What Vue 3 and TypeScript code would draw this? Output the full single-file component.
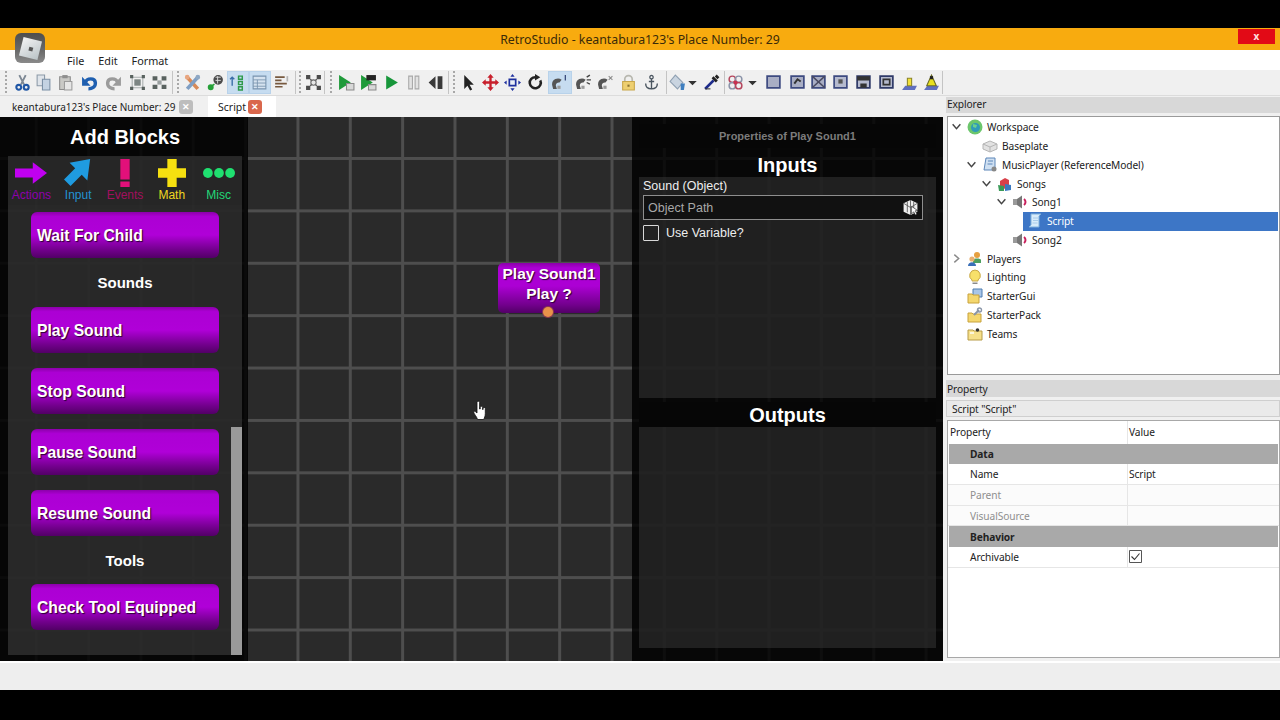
<script setup lang="ts">
/**
 * RetroStudio visual script editor window
 */
interface Part {
  d: string
  fill?: string
  stroke?: string
  sw?: number
}

interface ToolItem {
  k: 'tool' | 'sep' | 'grip'
  w: number
  icon?: string
  active?: boolean
}

// circle as a path, so every icon is just a list of paths
const c = (x: number, y: number, r: number) =>
  `M${x - r} ${y}a${r} ${r} 0 1 0 ${2 * r} 0a${r} ${r} 0 1 0 ${-2 * r} 0Z`

const icons: Record<string, Part[]> = {
  cut: [
    { d: 'M5 1l4.5 9M11 1L6.5 10', stroke: '#7d8894', sw: 1.8 },
    { d: c(4.5, 12.5, 2.3), stroke: '#1f56a5', sw: 2, fill: 'none' },
    { d: c(11.5, 12.5, 2.3), stroke: '#1f56a5', sw: 2, fill: 'none' },
  ],
  copy: [
    { d: 'M2 1h7v10H2z', fill: '#dfe4ea', stroke: '#8b99a8' },
    { d: 'M7 5h7v10H7z', fill: '#c4d2e2', stroke: '#7b8fa5' },
  ],
  paste: [
    { d: 'M2.5 2.5h10v12h-10z', fill: '#c9c9c6', stroke: '#8e8e8e' },
    { d: 'M5 1h5v3H5z', fill: '#8f8f8f' },
    { d: 'M7 7h7v8H7z', fill: '#e6e6e6', stroke: '#9b9b9b' },
  ],
  undo: [
    { d: 'M4 8c1.5-4.5 9-4.5 9.5 0s-3.5 6-6.5 6', stroke: '#1f5fb0', sw: 3.2, fill: 'none' },
    { d: 'M1 2.5V11h8z', fill: '#1f5fb0' },
  ],
  redo: [
    { d: 'M12 8c-1.5-4.5-9-4.500-9.5 0s3.5 6 6.5 6', stroke: '#9b9b9b', sw: 3.2, fill: 'none' },
    { d: 'M15 2.5V11H7z', fill: '#9b9b9b' },
  ],
  group: [
    { d: 'M3 3h10v10H3z', stroke: '#a9afaf', fill: 'none', sw: 1 },
    { d: 'M5 5h6v6H5z', fill: '#7d8684' },
    { d: 'M1 1h3v3H1zM12 1h3v3h-3zM1 12h3v3H1zM12 12h3v3h-3z', fill: '#59625f' },
  ],
  ungroup: [
    { d: 'M1.5 2H6v4H1.500zM10 2h4.5v4H10zM1.5 10H6v4H1.500zM10 10h4.5v4H10z', fill: '#59625f' },
    { d: 'M6 6h4v4H6z', fill: '#9aa0a0' },
  ],
  wrench: [
    { d: 'M3 3l10 11', stroke: '#d88a58', sw: 3.4 },
    { d: 'M13 3L3 14', stroke: '#7f9fc4', sw: 3.4 },
    { d: c(3, 3, 2.2), fill: '#e8a680' },
    { d: c(13, 3, 2.2), fill: '#8fa8c4' },
  ],
  scriptGear: [
    { d: c(10.5, 5.5, 4.5), fill: '#4b4b4b' },
    { d: 'M8 3h5M8 6h5M10 2v7', stroke: '#d8d8d8', sw: 0.9 },
    { d: c(3.5, 12.5, 2.8), fill: '#26a038' },
    { d: 'M7 9.5L5 11', stroke: '#26a038', sw: 1.4 },
  ],
  tree: [
    { d: 'M3 3v8M1 5l2-2 2 2', stroke: '#3b6ea8', sw: 1.3, fill: 'none' },
    { d: 'M9 2h3.5v3H9zM9 7h3.5v3H9zM9 12h3.5v3H9z', stroke: '#2f9a4c', sw: 1.4, fill: 'none' },
  ],
  table: [
    { d: 'M2 2h12v12H2z', fill: '#d5e2ef', stroke: '#7893ae' },
    { d: 'M2 5.5h12M2 8.5h12M2 11.5h12M6 5.5V14', stroke: '#7893ae', sw: 0.8 },
  ],
  list: [
    { d: 'M2 3h9M2 6h6M2 9h11M2 12h7', stroke: '#77593f', sw: 1.6 },
    { d: 'M13.5 2v5', stroke: '#b5b5b5', sw: 1.6 },
  ],
  fit: [
    { d: 'M1 1h4v4H1zM11 1h4v4h-4zM1 11h4v4H1zM11 11h4v4h-4z', fill: '#4a4a4a' },
    { d: 'M5 5l6 6M11 5l-6 6', stroke: '#4a4a4a', sw: 1.3 },
    { d: c(8, 8, 2.5), fill: '#e7e7e7', stroke: '#666' },
  ],
  playServer: [
    { d: 'M1 1l11 7-11 7z', fill: '#1f9a3a' },
    { d: 'M8 9h7v6H8z', fill: '#d8d8d8', stroke: '#8a8a8a' },
  ],
  playClient: [
    { d: 'M1 1l11 7-11 7z', fill: '#1f9a3a' },
    { d: 'M6 1h9v5H6z', fill: '#222' },
    { d: 'M8 10h7v5H8z', fill: '#d8d8d8', stroke: '#8a8a8a' },
  ],
  play: [{ d: 'M3 1.5l11 6.5-11 6.5z', fill: '#17963a' }],
  pause: [{ d: 'M3.5 2H7v12H3.5zM9.5 2H13v12H9.5z', fill: '#e2e2e2', stroke: '#a8a8a8' }],
  stepBack: [{ d: 'M8 2v12L1.5 8zM10 2h4.5v12H10z', fill: '#3a3a3a' }],
  cursor: [{ d: 'M4 1v13l3-3 2.5 4.5 2-1L9 10h4z', fill: '#222' }],
  move: [
    { d: 'M8 2v12M2 8h12', stroke: '#c8202c', sw: 2.2 },
    { d: 'M8 0l3 3.5H5zM8 16l3-3.5H5zM0 8l3.5 3V5zM16 8l-3.5 3V5z', fill: '#c8202c' },
  ],
  scale: [
    { d: 'M5 5h6v6H5z', fill: '#e9eef6', stroke: '#1e2f9e', sw: 1.6 },
    { d: 'M8 0l2 2.5H6zM8 16l2-2.5H6zM0 8l2.5 2V6zM16 8l-2.5 2V6z', fill: '#1e2f9e' },
  ],
  rotate: [
    { d: 'M12.5 6A5.2 5.2 0 1 1 8 3', stroke: '#222', sw: 2.4, fill: 'none' },
    { d: 'M7.5 0l5 3-5 3z', fill: '#222' },
  ],
  snap1: [
    { d: 'M1 10a5.5 5.5 0 0 1 9-4.5L8 8a2.8 2.8 0 0 0-3.5 2.5l1 3.5H2z', fill: '#555' },
    { d: 'M6 11h3v3H6z', fill: '#9a9a9a' },
    { d: 'M13.5 1v5', stroke: '#3a4a7a', sw: 1.2 },
  ],
  snap2: [
    { d: 'M1 10a5.5 5.5 0 0 1 9-4.5L8 8a2.8 2.8 0 0 0-3.5 2.5l1 3.5H2z', fill: '#555' },
    { d: 'M6 11h3v3H6z', fill: '#9a9a9a' },
    { d: 'M11 3l3-2M11 5.5h4M11 8l3 1.5', stroke: '#444', sw: 1.3 },
  ],
  snap3: [
    { d: 'M1 10a5.5 5.5 0 0 1 9-4.5L8 8a2.8 2.8 0 0 0-3.5 2.5l1 3.5H2z', fill: '#555' },
    { d: 'M6 11h3v3H6z', fill: '#9a9a9a' },
    { d: 'M11 2l3.5 3.5M14.5 2L11 5.5', stroke: '#8a8a8a', sw: 1 },
  ],
  lock: [
    { d: 'M4.5 7V5a3.5 3.5 0 0 1 7 0v2', stroke: '#b8b8b0', sw: 1.6, fill: 'none' },
    { d: 'M2.5 7h11v8h-11z', fill: '#eecf70', stroke: '#c8a648' },
    { d: 'M7 10h2v2H7z', fill: '#8a7230' },
  ],
  anchor: [
    { d: c(8, 3, 1.6), stroke: '#4a5560', fill: 'none', sw: 1.2 },
    { d: 'M8 4.5V14M2.5 9c0 4 3 5 5.5 5s5.5-1 5.5-5M5.5 7h5', stroke: '#4a5560', sw: 1.3, fill: 'none' },
  ],
  bucket: [
    { d: 'M6 1l7 7-5 6-7-7z', fill: '#c9d4e0', stroke: '#8fa0b2' },
    { d: 'M11 9h4l-1 6h-3z', fill: '#3f7fc0' },
  ],
  drop: [{ d: 'M4 6.5h8l-4 4z', fill: '#333' }],
  dropper: [
    { d: 'M2 14L10 6', stroke: '#1e2c8c', sw: 2.6 },
    { d: 'M9 3l4 4M12 1.5L14.5 4', stroke: '#222', sw: 2.6 },
    { d: 'M2 14h5', stroke: '#333', sw: 1 },
  ],
  material: [
    { d: c(5, 5, 3), stroke: '#b5475e', fill: 'none', sw: 1.4 },
    { d: c(11, 5, 3), stroke: '#8a93a8', fill: 'none', sw: 1.4 },
    { d: c(5, 11, 3), stroke: '#8a93a8', fill: 'none', sw: 1.4 },
    { d: c(11, 11, 3), stroke: '#b5475e', fill: 'none', sw: 1.4 },
    { d: c(8, 8, 2), fill: '#c9304f' },
  ],
  sf1: [{ d: 'M2 2h12v11H2z', fill: '#a9aec4', stroke: '#3d4a80', sw: 1.6 }],
  sf2: [
    { d: 'M2 2h12v11H2z', fill: '#a9aec4', stroke: '#3d4a80', sw: 1.6 },
    { d: 'M5 9l3-4 3 2', stroke: '#333', sw: 1.8, fill: 'none' },
  ],
  sf3: [
    { d: 'M2 2h12v11H2z', fill: '#a9aec4', stroke: '#3d4a80', sw: 1.6 },
    { d: 'M2 2l12 11M14 2L2 13', stroke: '#4a4a60', sw: 1.4 },
  ],
  sf4: [
    { d: 'M2 2h12v11H2z', fill: '#b5bace', stroke: '#3d4a80', sw: 1.6 },
    { d: 'M6 5h4v4H6z', fill: '#555' },
  ],
  sf5: [
    { d: 'M2 2h12v11H2z', fill: '#b5bace', stroke: '#2f3a68', sw: 1.6 },
    { d: 'M2 2h12v4H2zM5 9h6v4H5z', fill: '#333' },
  ],
  sf6: [
    { d: 'M2 2h12v11H2z', fill: '#b5bace', stroke: '#2f3a68', sw: 1.6 },
    { d: 'M5 5h6v5H5z', fill: 'none', stroke: '#333', sw: 1.6 },
  ],
  axis1: [
    { d: 'M1 15l3-4h11l-2 4z', fill: '#5f6fc0' },
    { d: 'M6 4h4v7H6z', fill: '#f2e03a', stroke: '#8a8428' },
  ],
  axis2: [
    { d: 'M1 15l3-4h11l-2 4z', fill: '#5f6fc0' },
    { d: 'M8 1l4.5 10h-9z', fill: '#e8e020', stroke: '#6a6a20' },
    { d: 'M6.5 2h3v3h-3z', fill: '#222' },
  ],
  globe: [
    { d: c(8, 8, 7.5), fill: '#6cc66c' },
    { d: c(8.5, 8.5, 4.5), fill: '#2f9bb8' },
    { d: 'M6 5l4 1-1 3-3-1z', fill: '#6cd08c' },
  ],
  cube: [
    { d: 'M8 3l7 3v5l-7 3-7-3V6z', fill: '#e2e2e2', stroke: '#b5b5b5' },
    { d: 'M1 6l7 3 7-3M8 9v5', stroke: '#b5b5b5', fill: 'none' },
  ],
  modelRef: [
    { d: 'M4 1h9v12H2z', fill: '#cfe0f2', stroke: '#5c86b8' },
    { d: 'M6 4h5M5.5 7h5', stroke: '#5c86b8' },
    { d: c(12, 12, 2.5), fill: '#888' },
  ],
  model: [
    { d: 'M3 5l5-3 4 2v6l-5 3-4-2z', fill: '#d8404a' },
    { d: 'M8 8l6 1v5l-6 1z', fill: '#3b78c0' },
    { d: 'M1 9l6 1v5H2z', fill: '#3a9a58' },
  ],
  speaker: [
    { d: 'M1 5h4v6H1z', fill: '#9a9a9a' },
    { d: 'M5 5l5-3.5v13L5 11z', fill: '#777' },
    { d: 'M12 5c2 1.5 2 4.5 0 6', stroke: '#c8205c', sw: 2, fill: 'none' },
  ],
  scriptDoc: [
    { d: 'M4 1h10l-2 2v11H2l2-2z', fill: '#d8ecfa', stroke: '#7fb0dc' },
    { d: 'M6 5h5M6 7.5h5M5.5 10h5', stroke: '#9cc4e6', sw: 0.8 },
  ],
  players: [
    { d: c(10, 4, 3), fill: '#e6a040' },
    { d: 'M6 9c0-2 8-2 8 0v3H6z', fill: '#4fa060' },
    { d: c(5, 8, 2.6), fill: '#e8b070' },
    { d: 'M1 15c0-5 8-5 8 0z', fill: '#3a6fb8' },
  ],
  bulb: [
    { d: 'M8 1a5.5 5.5 0 0 1 3 10v1H5v-1A5.5 5.5 0 0 1 8 1z', fill: '#f7e06a', stroke: '#c8a848' },
    { d: 'M5.5 13.5h5V15h-5z', fill: '#8a8a8a' },
  ],
  folderGui: [
    { d: 'M6 1h9v8H6z', fill: '#a9c6e8', stroke: '#4f7db0' },
    { d: 'M1 6h4l1 1h6v8H1z', fill: '#f4d76e', stroke: '#c8a23c' },
  ],
  folderPack: [
    { d: 'M1 6h4l1 1h8v8H1z', fill: '#f4d76e', stroke: '#c8a23c' },
    { d: 'M7 8l5-5', stroke: '#8a96a8', sw: 2 },
    { d: c(12.5, 3, 2), fill: 'none', stroke: '#8a96a8', sw: 1.4 },
  ],
  folderTeams: [
    { d: 'M1 4h5l1 1h8v9H1z', fill: '#f6e08a', stroke: '#b89c48' },
    { d: c(10.5, 4, 1.8), fill: '#333' },
    { d: 'M3 7h4', stroke: '#fff', sw: 1.4 },
  ],
}

const toolbar: ToolItem[] = [
  { k: 'grip', w: 11.5 },
  { k: 'tool', w: 21, icon: 'cut' },
  { k: 'tool', w: 21.5, icon: 'copy' },
  { k: 'tool', w: 23, icon: 'paste' },
  { k: 'tool', w: 24, icon: 'undo' },
  { k: 'tool', w: 24.5, icon: 'redo' },
  { k: 'tool', w: 24, icon: 'group' },
  { k: 'tool', w: 20.5, icon: 'ungroup' },
  { k: 'sep', w: 4 },
  { k: 'grip', w: 7 },
  { k: 'tool', w: 22.5, icon: 'wrench' },
  { k: 'tool', w: 23, icon: 'scriptGear' },
  { k: 'tool', w: 22, icon: 'tree', active: true },
  { k: 'tool', w: 22, icon: 'table', active: true },
  { k: 'tool', w: 22.5, icon: 'list' },
  { k: 'sep', w: 4 },
  { k: 'grip', w: 6 },
  { k: 'tool', w: 20, icon: 'fit' },
  { k: 'sep', w: 3 },
  { k: 'grip', w: 9 },
  { k: 'tool', w: 22.5, icon: 'playServer' },
  { k: 'tool', w: 22.5, icon: 'playClient' },
  { k: 'tool', w: 22, icon: 'play' },
  { k: 'tool', w: 22.5, icon: 'pause' },
  { k: 'tool', w: 22.5, icon: 'stepBack' },
  { k: 'sep', w: 3 },
  { k: 'grip', w: 7 },
  { k: 'tool', w: 22, icon: 'cursor' },
  { k: 'tool', w: 22.5, icon: 'move' },
  { k: 'tool', w: 22.5, icon: 'scale' },
  { k: 'tool', w: 23.5, icon: 'rotate' },
  { k: 'tool', w: 24.5, icon: 'snap1', active: true },
  { k: 'tool', w: 22, icon: 'snap2' },
  { k: 'tool', w: 23, icon: 'snap3' },
  { k: 'tool', w: 23, icon: 'lock' },
  { k: 'tool', w: 22, icon: 'anchor' },
  { k: 'sep', w: 8 },
  { k: 'tool', w: 14, icon: 'bucket' },
  { k: 'tool', w: 16, icon: 'drop' },
  { k: 'tool', w: 23, icon: 'dropper' },
  { k: 'sep', w: 3 },
  { k: 'tool', w: 19, icon: 'material' },
  { k: 'tool', w: 14, icon: 'drop' },
  { k: 'tool', w: 28, icon: 'sf1' },
  { k: 'tool', w: 20, icon: 'sf2' },
  { k: 'tool', w: 22.5, icon: 'sf3' },
  { k: 'tool', w: 22.5, icon: 'sf4' },
  { k: 'tool', w: 23, icon: 'sf5' },
  { k: 'tool', w: 23, icon: 'sf6' },
  { k: 'tool', w: 22.5, icon: 'axis1' },
  { k: 'tool', w: 21, icon: 'axis2' },
  { k: 'sep', w: 2 },
]

const categories = [
  { label: 'Actions', cls: 'actions' },
  { label: 'Input', cls: 'input' },
  { label: 'Events', cls: 'events' },
  { label: 'Math', cls: 'math' },
  { label: 'Misc', cls: 'misc' },
]

const blockList = [
  { type: 'block', text: 'Wait For Child' },
  { type: 'label', text: 'Sounds' },
  { type: 'block', text: 'Play Sound' },
  { type: 'block', text: 'Stop Sound' },
  { type: 'block', text: 'Pause Sound' },
  { type: 'block', text: 'Resume Sound' },
  { type: 'label', text: 'Tools' },
  { type: 'block', text: 'Check Tool Equipped' },
]

const tree = [
  { level: 0, arrow: 'open', icon: 'globe', text: 'Workspace' },
  { level: 1, arrow: '', icon: 'cube', text: 'Baseplate' },
  { level: 1, arrow: 'open', icon: 'modelRef', text: 'MusicPlayer (ReferenceModel)' },
  { level: 2, arrow: 'open', icon: 'model', text: 'Songs' },
  { level: 3, arrow: 'open', icon: 'speaker', text: 'Song1' },
  { level: 4, arrow: '', icon: 'scriptDoc', text: 'Script', selected: true },
  { level: 3, arrow: '', icon: 'speaker', text: 'Song2' },
  { level: 0, arrow: 'closed', icon: 'players', text: 'Players' },
  { level: 0, arrow: '', icon: 'bulb', text: 'Lighting' },
  { level: 0, arrow: '', icon: 'folderGui', text: 'StarterGui' },
  { level: 0, arrow: '', icon: 'folderPack', text: 'StarterPack' },
  { level: 0, arrow: '', icon: 'folderTeams', text: 'Teams' },
]
</script>

<template>
  <div class="window">
    <div class="letterbox-top"></div>

    <div class="titlebar">
      <span>RetroStudio - keantabura123's Place Number: 29</span>
      <div class="close-btn">x</div>
    </div>

    <!-- logo hangs over title and menu bars -->
    <div class="logo"><div class="logo-square"><i></i></div></div>

    <div class="menubar">
      <span>File</span>
      <span>Edit</span>
      <span>Format</span>
    </div>

    <div class="toolbar">
      <template v-for="(item, i) in toolbar" :key="i">
        <div v-if="item.k === 'grip'" class="grip" :style="{ width: item.w + 'px' }"><i></i></div>
        <div v-else-if="item.k === 'sep'" class="sep" :style="{ width: item.w + 'px' }"><i></i></div>
        <div v-else class="tool" :class="{ active: item.active }" :style="{ width: item.w + 'px' }">
          <svg class="tool-icon" viewBox="0 0 16 16">
            <path
              v-for="(p, j) in icons[item.icon!]"
              :key="j"
              :d="p.d"
              :fill="p.fill ?? 'none'"
              :stroke="p.stroke ?? 'none'"
              :stroke-width="p.sw ?? 1"
            />
          </svg>
        </div>
      </template>
    </div>

    <div class="body">
      <div class="work">
        <div class="tabs">
          <div class="tab">
            <span>keantabura123's Place Number: 29</span>
            <b class="tab-x">✕</b>
          </div>
          <div class="tab current">
            <span>Script</span>
            <b class="tab-x red">✕</b>
          </div>
        </div>

        <div class="editor">
          <aside class="blocks">
            <h1>Add Blocks</h1>
            <div class="cats">
              <div v-for="cat in categories" :key="cat.cls" class="cat" :class="cat.cls">
                <svg v-if="cat.cls === 'actions'" viewBox="0 0 36 24"><path d="M0 7h20V0l16 12-16 12v-7H0z" fill="#c000f0" /></svg>
                <svg v-else-if="cat.cls === 'input'" viewBox="0 0 30 30"><path d="M28 0l-3 23-6-6L7 29 0 22l12-12-6-6z" fill="#1f9be0" /></svg>
                <svg v-else-if="cat.cls === 'events'" viewBox="0 0 30 30"><path d="M10 0h10v22H10zM10 24h10v6H10z" fill="#e2107a" /></svg>
                <svg v-else-if="cat.cls === 'math'" viewBox="0 0 30 30"><path d="M10 0h10v10h10v10H20v10H10V20H0V10h10z" fill="#f6e010" /></svg>
                <svg v-else viewBox="0 0 36 30">
                  <circle cx="5.5" cy="15" r="5.5" fill="#1fe070" />
                  <circle cx="18" cy="15" r="5.5" fill="#1fe070" />
                  <circle cx="30.5" cy="15" r="5.5" fill="#1fe070" />
                </svg>
                <span>{{ cat.label }}</span>
              </div>
            </div>
            <div class="block-list">
              <template v-for="row in blockList" :key="row.text">
                <div v-if="row.type === 'block'" class="block">{{ row.text }}</div>
                <div v-else class="block-label">{{ row.text }}</div>
              </template>
              <div class="scroll-thumb"></div>
            </div>
          </aside>

          <div class="canvas">
            <div class="node">
              <div>Play Sound1</div>
              <div>Play ?</div>
              <i class="pin"></i>
            </div>
            <svg class="hand" viewBox="0 0 14 22">
              <path
                d="M4 2.5a1.3 1.3 0 0 1 2.6 0V9h.6V7.5a1.2 1.2 0 0 1 2.4 0v2h.5v-1a1.1 1.1 0 0 1 2.2 0v5c0 3-1 4-1.5 6H4.5C4 17 1 14 .8 12.5c-.2-1 1-1.5 1.7-.8L4 13z"
                fill="#fff"
                stroke="#111"
                stroke-width=".8"
              />
            </svg>
          </div>

          <section class="props">
            <div class="props-title">Properties of Play Sound1</div>
            <h2 class="props-head">Inputs</h2>
            <div class="props-panel">
              <div class="field-label">Sound (Object)</div>
              <div class="field">
                <span>Object Path</span>
                <svg class="pick" viewBox="0 0 16 16">
                  <path d="M8 1l6.5 3v8L8 15l-6.500-3V4z" fill="#eee" />
                  <path d="M8 1v14M1.5 4L8 8l6.5-4M5 2.5v10M11 2.500v10" stroke="#555" stroke-width=".8" fill="none" />
                  <path d="M9 7v7l2-2 1.5 3 1.5-.8L12.5 11H15z" fill="#fff" stroke="#222" stroke-width=".6" />
                </svg>
              </div>
              <div class="check-row">
                <i class="check"></i>
                <span>Use Variable?</span>
              </div>
            </div>
            <h2 class="props-head outputs">Outputs</h2>
            <div class="props-panel"></div>
          </section>
        </div>
      </div>

      <div class="side">
        <div class="dock-head">Explorer</div>
        <div class="tree">
          <div v-for="row in tree" :key="row.text" class="tree-row">
            <span class="indent" :style="{ width: row.level * 15 + 'px' }"></span>
            <span class="arrow">
              <svg v-if="row.arrow === 'open'" viewBox="0 0 10 10"><path d="M1.5 3L5 7l3.5-4" fill="none" stroke="#444" stroke-width="1.3" /></svg>
              <svg v-else-if="row.arrow === 'closed'" viewBox="0 0 10 10"><path d="M3 1.5L7 5 3 8.5" fill="none" stroke="#888" stroke-width="1.3" /></svg>
            </span>
            <span class="tree-item" :class="{ selected: row.selected }">
              <svg class="tree-icon" viewBox="0 0 16 16">
                <path
                  v-for="(p, j) in icons[row.icon]"
                  :key="j"
                  :d="p.d"
                  :fill="p.fill ?? 'none'"
                  :stroke="p.stroke ?? 'none'"
                  :stroke-width="p.sw ?? 1"
                />
              </svg>
              <span>{{ row.text }}</span>
            </span>
          </div>
        </div>

        <div class="dock-head second">Property</div>
        <div class="filter">Script "Script"</div>

        <div class="prop-table">
          <div class="cell head">Property</div>
          <div class="cell head val">Value</div>
          <div class="group">Data</div>
          <div class="cell name">Name</div>
          <div class="cell val">Script</div>
          <div class="cell name off">Parent</div>
          <div class="cell val shade"></div>
          <div class="cell name off">VisualSource</div>
          <div class="cell val shade"></div>
          <div class="group">Behavior</div>
          <div class="cell name">Archivable</div>
          <div class="cell val">
            <svg class="tick" viewBox="0 0 13 13">
              <path d="M.5.5h12v12H.5z" fill="#fff" stroke="#555" />
              <path d="M2.5 6.5l3 3 5-6" fill="none" stroke="#333" stroke-width="1.1" />
            </svg>
          </div>
        </div>
      </div>
    </div>

    <div class="statusbar"></div>
    <div class="letterbox-bottom"></div>
  </div>
</template>

<style scoped>
.window {
  position: relative;
  width: 1280px;
  height: 720px;
  overflow: hidden;
  display: flex;
  flex-direction: column;
  background: #000;
  font-family: 'Noto Sans', 'Open Sans', sans-serif;
  color: #222;
}

.letterbox-top {
  height: 28px;
  flex: none;
}

.letterbox-bottom {
  height: 30px;
  flex: none;
}

.titlebar {
  position: relative;
  height: 22px;
  flex: none;
  background: #f8ab0f;
  display: flex;
  align-items: center;
  justify-content: center;
  font-size: 12.3px;
  color: #3a2a08;
}

.close-btn {
  position: absolute;
  top: 1px;
  right: 5px;
  width: 37px;
  height: 15px;
  background: #e20a16;
  color: #ffe0e0;
  font-size: 10px;
  font-weight: 700;
  text-align: center;
  line-height: 15px;
}

.logo {
  position: absolute;
  left: 15px;
  top: 33px;
  width: 30px;
  height: 30px;
  border-radius: 6px;
  background: linear-gradient(#4e4e4e, #6b6b6b 60%, #8a8a8a);
  display: flex;
  align-items: center;
  justify-content: center;
}

.logo-square {
  width: 19px;
  height: 19px;
  transform: rotate(14deg);
  background: linear-gradient(135deg, #f4f4f4, #b9c2c6);
  display: flex;
  align-items: center;
  justify-content: center;
}

.logo-square i {
  width: 4px;
  height: 4px;
  background: #555;
}

.menubar {
  height: 20px;
  flex: none;
  background: #fff;
  display: flex;
  align-items: center;
  padding-left: 67px;
  gap: 14px;
  font-size: 10.8px;
}

.toolbar {
  height: 26px;
  flex: none;
  background: #f0f0f0;
  border-bottom: 1px solid #dcdcdc;
  box-sizing: border-box;
  display: flex;
  align-items: center;
}

.tool {
  height: 23px;
  flex: none;
  display: flex;
  align-items: center;
  justify-content: center;
}

.tool.active {
  background: #c6dcf0;
  box-shadow: inset 0 0 0 1px #b8d2ea;
}

.tool-icon {
  width: 17px;
  height: 17px;
  flex: none;
  filter: blur(0.4px);
}

.grip,
.sep {
  height: 23px;
  flex: none;
  display: flex;
  justify-content: center;
}

.grip i {
  width: 2px;
  height: 100%;
  background: repeating-linear-gradient(#a8a8a8 0 2px, transparent 2px 4px);
}

.sep i {
  width: 1px;
  height: 100%;
  background: #c4c4c4;
}

.body {
  height: 565px;
  flex: none;
  display: flex;
  background: #f0f0f0;
}

.work {
  width: 943px;
  flex: none;
  display: flex;
  flex-direction: column;
}

.tabs {
  height: 21px;
  flex: none;
  display: flex;
  font-size: 10px;
  white-space: nowrap;
}

.tab {
  display: flex;
  align-items: center;
  justify-content: space-between;
  padding: 0 15px 0 12px;
  width: 208px;
  box-sizing: border-box;
}

.tab.current {
  width: 68px;
  padding: 0 14px 0 10px;
  background: #fff;
  font-size: 10.5px;
}

.tab-x {
  width: 14px;
  height: 14px;
  flex: none;
  border-radius: 3px;
  background: #bdbdbd;
  color: #fff;
  font-size: 9px;
  line-height: 14px;
  text-align: center;
}

.tab-x.red {
  background: #d9674c;
}

.editor {
  flex: 1;
  min-height: 0;
  display: flex;
  background-color: #2a2a2a;
  background-image:
    linear-gradient(90deg, #4e4e4e 3px, transparent 3px),
    linear-gradient(#4e4e4e 3px, transparent 3px);
  background-size: 52.35px 52.4px;
  background-position: 34.75px 40px;
  color: #fff;
  font-family: 'Liberation Sans', Arial, sans-serif;
}

.blocks {
  width: 248px;
  flex: none;
  box-sizing: border-box;
  padding: 0 6px 6px 8px;
  background: rgba(0, 0, 0, 0.86);
  display: flex;
  flex-direction: column;
}

.blocks h1 {
  height: 39px;
  margin: 0;
  flex: none;
  font-size: 20px;
  line-height: 40px;
  font-weight: 700;
  text-align: center;
}

.cats {
  height: 49px;
  flex: none;
  background: rgba(70, 70, 70, 0.5);
  display: flex;
  box-sizing: border-box;
  padding: 3px 0 0;
}

.cat {
  width: 47px;
  display: flex;
  flex-direction: column;
  align-items: center;
  font-size: 12px;
}

.cat svg {
  height: 28px;
  width: 32px;
}

.cat span {
  margin-top: 1px;
  line-height: 14px;
}

.cat.actions {
  color: #8f00ad;
}

.cat.input {
  color: #2392d2;
}

.cat.events {
  color: #a30f5e;
}

.cat.math {
  color: #f0d820;
}

.cat.misc {
  color: #22d878;
}

.block-list {
  position: relative;
  flex: 1;
  min-height: 0;
  overflow: hidden;
  padding: 7px 0 0 23px;
  background: rgba(62, 62, 62, 0.62);
}

.block {
  width: 188px;
  height: 46px;
  box-sizing: border-box;
  padding-left: 6px;
  border-radius: 6px;
  background: linear-gradient(#8c00aa, #ac00d4 10%, #b000d8 50%, #72008c 82%, #520066);
  font-size: 15.7px;
  font-weight: 700;
  line-height: 48px;
  white-space: nowrap;
  text-shadow: 1px 1px 1px #2a0033;
}

.block + .block {
  margin-top: 15px;
}

.block-label {
  width: 188px;
  height: 48.5px;
  font-size: 15px;
  font-weight: 700;
  line-height: 49px;
  text-align: center;
}

.scroll-thumb {
  position: absolute;
  right: 0;
  bottom: 0;
  width: 11px;
  height: 228px;
  background: #9a9a9a;
}

.canvas {
  position: relative;
  flex: 1;
}

.node {
  position: absolute;
  left: 250px;
  top: 146px;
  width: 102px;
  height: 50px;
  box-sizing: border-box;
  padding-top: 1px;
  border-radius: 5px;
  background: linear-gradient(#8a00a8, #ac00d4 10%, #ac00d4 46%, #72008c 84%, #520066);
  text-align: center;
  font-size: 15.5px;
  font-weight: 700;
  line-height: 19.5px;
  text-shadow: 1px 1px 1px #2a0033;
}

.pin {
  position: absolute;
  left: 45px;
  bottom: -4px;
  width: 10px;
  height: 10px;
  border-radius: 50%;
  background: #e8924a;
  box-shadow: 0 0 0 1px #8a3a50;
}

.hand {
  position: absolute;
  left: 225px;
  top: 283px;
  width: 14px;
  height: 22px;
}

.props {
  width: 311px;
  flex: none;
  box-sizing: border-box;
  padding: 7px 7px 13px;
  background: rgba(0, 0, 0, 0.82);
  display: flex;
  flex-direction: column;
}

.props-title {
  height: 24px;
  flex: none;
  background: #060606;
  color: #7c7c7c;
  font-size: 11px;
  font-weight: 700;
  line-height: 24px;
  text-align: center;
}

.props-head {
  height: 29px;
  margin: 0;
  flex: none;
  font-size: 20px;
  font-weight: 700;
  line-height: 35px;
  text-align: center;
}

.props-head.outputs {
  height: 25px;
  margin-top: 4px;
  background: #060606;
  line-height: 26px;
}

.props-panel {
  height: 221px;
  flex: none;
  box-sizing: border-box;
  padding: 2px 13px 0 4px;
  background: rgba(50, 50, 50, 0.6);
}

.field-label {
  height: 16px;
  font-size: 12.5px;
  line-height: 15px;
  color: #eee;
}

.field {
  height: 25px;
  box-sizing: border-box;
  border: 1px solid #8e8e8e;
  background: #111;
  display: flex;
  align-items: center;
  justify-content: space-between;
  padding: 0 3px 0 4px;
  font-size: 12.5px;
  color: #a8a8a8;
}

.pick {
  width: 17px;
  height: 17px;
}

.check-row {
  margin-top: 5px;
  display: flex;
  align-items: center;
  gap: 7px;
  font-size: 12.5px;
  color: #eee;
}

.check {
  width: 16px;
  height: 16px;
  box-sizing: border-box;
  border: 1.5px solid #d8d8d8;
  border-radius: 1px;
  background: #222;
}

.side {
  flex: 1;
  min-width: 0;
  padding-left: 3px;
  display: flex;
  flex-direction: column;
  font-size: 10.2px;
  letter-spacing: -0.1px;
}

.dock-head {
  margin-top: 1px;
  height: 16px;
  flex: none;
  background: #d8d8d8;
  line-height: 15px;
  padding-left: 1px;
}

.dock-head.second {
  margin-top: 5px;
  height: 17px;
  line-height: 18px;
}

.tree {
  margin-top: 3px;
  margin-left: 1px;
  height: 259px;
  flex: none;
  box-sizing: border-box;
  border: 1px solid #9a9a9a;
  padding-top: 1px;
  background: #fff;
}

.tree-row {
  height: 18.75px;
  display: flex;
  align-items: center;
}

.indent {
  flex: none;
}

.arrow {
  width: 12px;
  height: 12px;
  flex: none;
  margin-left: 3px;
}

.arrow svg {
  display: block;
  width: 11px;
  height: 11px;
}

.tree-item {
  flex: 1;
  align-self: stretch;
  margin-right: 1px;
  display: flex;
  align-items: center;
  gap: 4px;
  padding-left: 4px;
}

.tree-item.selected {
  background: #3d76c6;
  color: #fff;
}

.tree-icon {
  width: 16px;
  height: 16px;
  flex: none;
  filter: blur(0.3px);
}

.filter {
  margin-top: 3px;
  height: 17px;
  flex: none;
  box-sizing: border-box;
  border: 1px solid #cfcfcf;
  background: #eaeaea;
  padding-left: 5px;
  line-height: 16px;
}

.prop-table {
  margin: 3px 0 3px 1px;
  flex: 1;
  box-sizing: border-box;
  border: 1px solid #a8a8a8;
  background: #fff;
  display: grid;
  grid-template-columns: 179px 1fr;
  grid-template-rows: 22.6px;
  grid-auto-rows: 20.7px;
  align-content: start;
}

.cell {
  display: flex;
  align-items: center;
  box-sizing: border-box;
  border-bottom: 1px solid #e6e6e6;
}

.cell.head {
  padding-left: 2px;
  border-bottom: none;
}

.cell.val {
  padding-left: 1px;
  border-left: 1px solid #e6e6e6;
}

.cell.name {
  padding-left: 22px;
}

.cell.off {
  color: #8f8f8f;
  background: #fbfbfb;
}

.cell.shade {
  background: #fbfbfb;
}

.group {
  grid-column: 1 / 3;
  margin: 0 1px;
  padding-left: 21px;
  background: #a9a9a9;
  font-weight: 700;
  display: flex;
  align-items: center;
}

.tick {
  width: 13px;
  height: 13px;
}

.statusbar {
  height: 29px;
  flex: none;
  background: #eeeeee;
  border-top: 2px solid #fff;
  box-sizing: border-box;
}
</style>

<style>
html,
body {
  margin: 0;
  background: #000;
}
</style>
